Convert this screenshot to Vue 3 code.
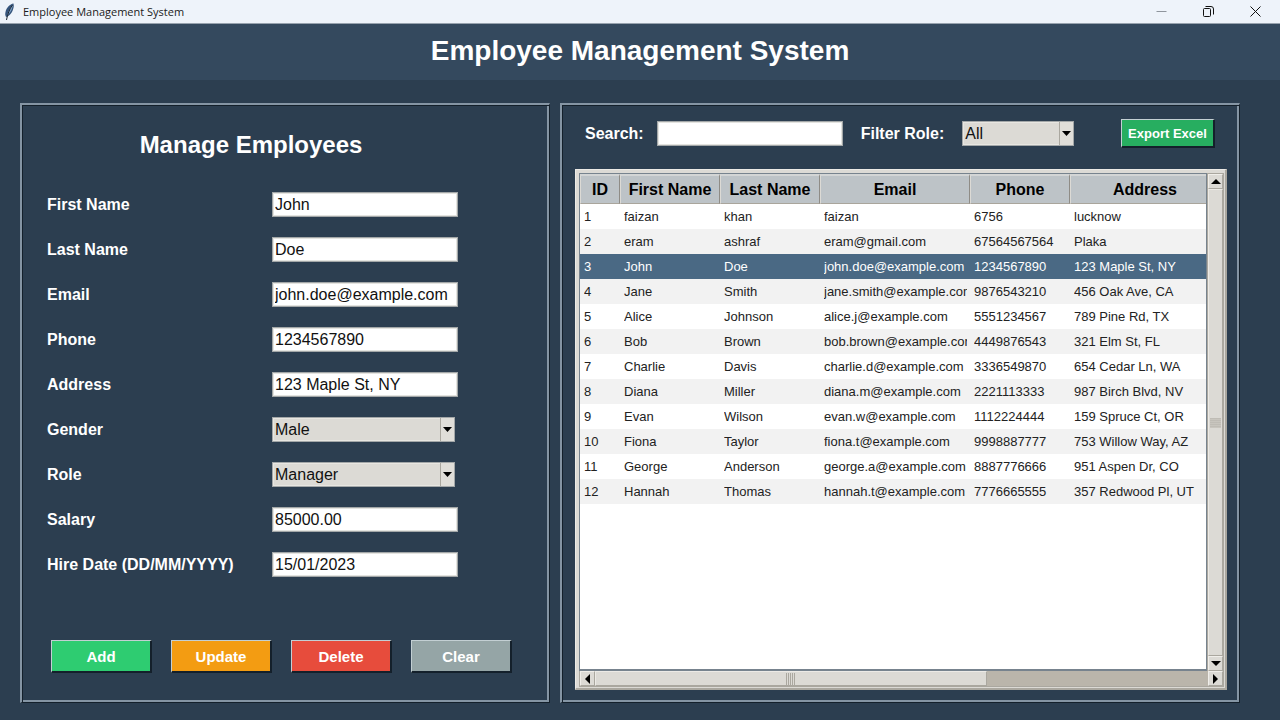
<script setup>
import { ref, computed } from 'vue'

const fields = ref([
  { id: 'first', label: 'First Name', value: 'John' },
  { id: 'last', label: 'Last Name', value: 'Doe' },
  { id: 'email', label: 'Email', value: 'john.doe@example.com' },
  { id: 'phone', label: 'Phone', value: '1234567890' },
  { id: 'address', label: 'Address', value: '123 Maple St, NY' },
  { id: 'gender', label: 'Gender', value: 'Male', options: ['Male', 'Female', 'Other'] },
  { id: 'role', label: 'Role', value: 'Manager', options: ['Manager', 'Developer', 'HR'] },
  { id: 'salary', label: 'Salary', value: '85000.00' },
  { id: 'hired', label: 'Hire Date (DD/MM/YYYY)', value: '15/01/2023' },
])

const actions = [
  { name: 'Add', tone: 'green' },
  { name: 'Update', tone: 'orange' },
  { name: 'Delete', tone: 'red' },
  { name: 'Clear', tone: 'gray' },
]

const columns = ['ID', 'First Name', 'Last Name', 'Email', 'Phone', 'Address']

const employees = [
  [1, 'faizan', 'khan', 'faizan', '6756', 'lucknow'],
  [2, 'eram', 'ashraf', 'eram@gmail.com', '67564567564', 'Plaka'],
  [3, 'John', 'Doe', 'john.doe@example.com', '1234567890', '123 Maple St, NY'],
  [4, 'Jane', 'Smith', 'jane.smith@example.com', '9876543210', '456 Oak Ave, CA'],
  [5, 'Alice', 'Johnson', 'alice.j@example.com', '5551234567', '789 Pine Rd, TX'],
  [6, 'Bob', 'Brown', 'bob.brown@example.com', '4449876543', '321 Elm St, FL'],
  [7, 'Charlie', 'Davis', 'charlie.d@example.com', '3336549870', '654 Cedar Ln, WA'],
  [8, 'Diana', 'Miller', 'diana.m@example.com', '2221113333', '987 Birch Blvd, NV'],
  [9, 'Evan', 'Wilson', 'evan.w@example.com', '1112224444', '159 Spruce Ct, OR'],
  [10, 'Fiona', 'Taylor', 'fiona.t@example.com', '9998887777', '753 Willow Way, AZ'],
  [11, 'George', 'Anderson', 'george.a@example.com', '8887776666', '951 Aspen Dr, CO'],
  [12, 'Hannah', 'Thomas', 'hannah.t@example.com', '7776665555', '357 Redwood Pl, UT'],
]

const selected = ref(3)
const search = ref('')
const filter = ref('All')
const visible = computed(() =>
  employees.filter((e) => e.join(' ').toLowerCase().includes(search.value.toLowerCase()))
)
</script>

<template>
  <div class="window">
    <div class="titlebar">
      <svg class="feather" width="12" height="18" viewBox="0 0 12 18" aria-hidden="true">
        <path d="M9.500 0.500C6 1 2.500 4.500 1.500 9C1 11 1.200 12.500 2 14L3.500 13.500C7 12 9.500 7 9.800 3Z" fill="#35547c" />
        <path d="M9 1.500C7 3.500 4.500 7 3 12.500C6 10.500 8.500 6 9 1.500Z" fill="#7ea0c4" />
        <path d="M8.500 2C5.500 6 3.500 11 2.500 17" fill="none" stroke="#1c2733" />
      </svg>
      <span class="caption">Employee Management System</span>
      <button class="wbtn" aria-label="Minimize">
        <svg width="11" height="11" viewBox="0 0 11 11"><path d="M0.500 5.500H10.500" stroke="#8f959d" /></svg>
      </button>
      <button class="wbtn" aria-label="Restore">
        <svg width="11" height="11" viewBox="0 0 11 11" fill="none" stroke="#111">
          <rect x="0.500" y="2.500" width="7" height="8" rx="1" />
          <path d="M2.500 0.500H8Q10.500 0.500 10.500 3V8.500" />
        </svg>
      </button>
      <button class="wbtn" aria-label="Close">
        <svg width="11" height="11" viewBox="0 0 11 11"><path d="M0.500 0.500L10.500 10.500M10.500 0.500L0.500 10.500" stroke="#111" /></svg>
      </button>
    </div>

    <header class="banner"><h1>Employee Management System</h1></header>

    <main class="content">
      <section class="panel manage">
        <h2>Manage Employees</h2>
        <form class="form" @submit.prevent>
          <template v-for="f in fields" :key="f.id">
            <label :for="f.id">{{ f.label }}</label>
            <div v-if="f.options" class="combo">
              <select :id="f.id" v-model="f.value">
                <option v-for="o in f.options" :key="o">{{ o }}</option>
              </select>
              <span class="drop"><svg width="9" height="5" viewBox="0 0 9 5"><path d="M0 0H9L4.500 5Z" /></svg></span>
            </div>
            <input v-else :id="f.id" v-model="f.value" class="entry" type="text" />
          </template>
        </form>
        <div class="actions">
          <button v-for="a in actions" :key="a.name" class="btn" :class="a.tone">{{ a.name }}</button>
        </div>
      </section>

      <section class="panel records">
        <div class="toolbar">
          <label class="search-label" for="search">Search:</label>
          <input id="search" v-model="search" class="entry" type="text" />
          <label class="filter-label" for="filter">Filter Role:</label>
          <div class="combo small">
            <select id="filter" v-model="filter">
              <option>All</option>
              <option>Manager</option>
              <option>Developer</option>
            </select>
            <span class="drop"><svg width="9" height="5" viewBox="0 0 9 5"><path d="M0 0H9L4.500 5Z" /></svg></span>
          </div>
          <button class="btn export">Export Excel</button>
        </div>

        <div class="frame">
          <div class="view">
            <table>
              <colgroup>
                <col class="c-id" /><col class="c-mid" /><col class="c-mid" />
                <col class="c-wide" /><col class="c-mid" /><col class="c-wide" />
              </colgroup>
              <thead>
                <tr><th v-for="c in columns" :key="c" scope="col">{{ c }}</th></tr>
              </thead>
              <tbody>
                <tr v-for="e in visible" :key="e[0]" :class="{ picked: e[0] === selected }" @click="selected = e[0]">
                  <td v-for="(v, i) in e" :key="i"><div class="cell">{{ v }}</div></td>
                </tr>
              </tbody>
            </table>
          </div>
          <div class="bar vertical">
            <button class="arrow" aria-label="Scroll up"><svg width="10" height="5" viewBox="0 0 10 5"><path d="M0 5H10L5 0Z" /></svg></button>
            <div class="track"><div class="thumb"><span class="grip"></span></div></div>
            <button class="arrow" aria-label="Scroll down"><svg width="10" height="5" viewBox="0 0 10 5"><path d="M0 0H10L5 5Z" /></svg></button>
          </div>
          <div class="bar horizontal">
            <button class="arrow" aria-label="Scroll left"><svg width="5" height="10" viewBox="0 0 5 10"><path d="M5 0V10L0 5Z" /></svg></button>
            <div class="track"><div class="thumb"><span class="grip"></span></div></div>
            <button class="arrow" aria-label="Scroll right"><svg width="5" height="10" viewBox="0 0 5 10"><path d="M0 0V10L5 5Z" /></svg></button>
          </div>
        </div>
      </section>
    </main>
  </div>
</template>

<style>
body {
  background: #2c3e50;
}
</style>

<style scoped>
.window,
.window * {
  box-sizing: border-box;
}
.window {
  display: flex;
  flex-direction: column;
  min-height: 100vh;
  background: #2c3e50;
  color: #fff;
  font-family: "Liberation Sans", Arial, sans-serif;
  font-size: 16px;
}
button,
input,
select {
  margin: 0;
  font-family: inherit;
}
.titlebar {
  display: flex;
  align-items: center;
  height: 24px;
  padding: 0 1px 0 4px;
  background: #eef3fa;
  border-bottom: 1px solid #97a2ae;
}
.caption {
  flex: 1;
  margin-left: 7px;
  color: #1b1b1b;
  font: 11px/23px "Open Sans", "Noto Sans", sans-serif;
}
.wbtn {
  display: flex;
  align-items: center;
  justify-content: center;
  width: 47px;
  height: 23px;
  padding: 0;
  border: 0;
  background: none;
}
.banner {
  height: 56px;
  background: #34495e;
  text-align: center;
}
h1 {
  margin: 0;
  font-size: 28px;
  line-height: 54px;
}
.content {
  flex: 1;
  display: grid;
  grid-template-columns: 530fr 680fr;
  gap: 10px;
  padding: 23px 40px 17px 20px;
}
.panel {
  display: flex;
  flex-direction: column;
  min-width: 0;
  border: solid;
  border-width: 2px 1px 1px 2px;
  border-color: #8595a4 #14202b #14202b #8595a4;
  box-shadow: inset 1px 1px #14202b, inset -2px -2px #8595a4;
}
.manage {
  padding: 26px 25px;
}
h2 {
  width: 408px;
  margin: 0 0 33px;
  font-size: 24px;
  line-height: 28px;
  text-align: center;
}
.form {
  display: grid;
  grid-template-columns: 225px 186px;
  row-gap: 20px;
}
label {
  font-weight: bold;
  line-height: 25px;
}
.entry {
  width: 186px;
  height: 25px;
  padding: 0 2px;
  border: 1px solid #a3a7a8;
  outline: 1px solid #e4e4e0;
  outline-offset: -2px;
  border-radius: 0;
  background: #fff;
  color: #111;
  font-size: 16px;
}
.combo {
  position: relative;
  width: 183px;
  height: 25px;
}
.combo.small {
  width: 112px;
}
.combo select {
  width: 100%;
  height: 100%;
  padding: 0 18px 0 2px;
  appearance: none;
  border: 1px solid #a3a7a8;
  border-radius: 0;
  background: #dcdad5;
  box-shadow: inset 0 0 0 1px #e8e6e1;
  color: #111;
  font-size: 16px;
}
.drop {
  position: absolute;
  top: 1px;
  right: 1px;
  bottom: 1px;
  display: flex;
  align-items: center;
  justify-content: center;
  width: 14px;
  border-left: 1px solid #aaa79f;
  background: #e0ded9;
  pointer-events: none;
}
.actions {
  display: flex;
  gap: 19px;
  margin: 63px 0 0 4px;
}
.btn {
  flex: none;
  width: 101px;
  height: 33px;
  padding: 0;
  border: solid;
  border-width: 1px 2px 2px 1px;
  border-color: #c3cfd3 #14202b #14202b #c3cfd3;
  color: #fff;
  font-size: 15px;
  font-weight: bold;
}
.green { background: #2ecc71; }
.orange { background: #f39c12; }
.red { background: #e74c3c; }
.gray { background: #95a5a6; }
.records {
  padding: 14px 12px 12px 13px;
}
.toolbar {
  display: flex;
  align-items: center;
  padding: 0 12px 0 10px;
}
.search-label {
  margin-right: 13px;
}
.filter-label {
  margin: 0 18px;
}
.btn.export {
  width: 94px;
  height: 29px;
  margin-left: auto;
  background: #27ae60;
  font-size: 13px;
}
.frame {
  flex: 1;
  display: grid;
  grid-template-columns: 1fr 17px;
  grid-template-rows: 1fr 16px;
  margin-top: 21px;
  padding: 3px 1px 1px 3px;
  border: solid;
  border-width: 1px 2px 2px 1px;
  border-color: #eceae6 #aaa79f #aaa79f #eceae6;
  background: #dcdad5;
}
.view {
  min-width: 0;
  overflow: hidden;
  border: solid #77838e;
  border-width: 1px 1px 2px;
  background: #fff;
}
table {
  width: 640px;
  table-layout: fixed;
  border-collapse: separate;
  border-spacing: 0;
  color: #222;
  font-size: 13px;
}
.c-id { width: 40px; }
.c-mid { width: 100px; }
.c-wide { width: 150px; }
th {
  height: 30px;
  padding: 0;
  border: solid;
  border-width: 2px 1px 1px;
  border-color: #d3d5d5 #8f8c86 #a9a59c #dcdad5;
  background: #bdc3c7;
  color: #000;
  font-size: 16px;
}
td {
  height: 25px;
  padding: 0 3px 0 4px;
}
.cell {
  overflow: hidden;
  white-space: nowrap;
}
tbody tr:nth-child(even) {
  background: #f2f2f2;
}
tbody tr.picked {
  background: #4a6984;
  color: #fff;
}
.bar {
  display: flex;
  background: #bab5ab;
}
.vertical {
  flex-direction: column;
  border: solid #aaa79f;
  border-width: 1px 1px 0;
}
.horizontal {
  grid-column: 1 / -1;
  border: 1px solid #aaa79f;
  border-top: 0;
}
.arrow {
  display: flex;
  align-items: center;
  justify-content: center;
  width: 15px;
  height: 15px;
  padding: 0;
  border: 1px solid #f0eeea;
  border-right-color: #aaa79f;
  border-bottom-color: #aaa79f;
  background: #dcdad5;
}
.track {
  flex: 1;
}
.thumb {
  display: flex;
  align-items: center;
  justify-content: center;
  height: 100%;
  border: 1px solid #eceae6;
  border-right-color: #aaa79f;
  border-bottom-color: #aaa79f;
  background: #dcdad5;
}
.horizontal .thumb {
  width: 64%;
}
.grip {
  width: 10px;
  height: 12px;
  background: repeating-linear-gradient(90deg, #aaa79f 0 1px, #dcdad5 1px 2px);
}
.vertical .grip {
  width: 11px;
  height: 10px;
  background: repeating-linear-gradient(#bfbcb5 0 1px, #c8c5be 1px 2px);
}
</style>
